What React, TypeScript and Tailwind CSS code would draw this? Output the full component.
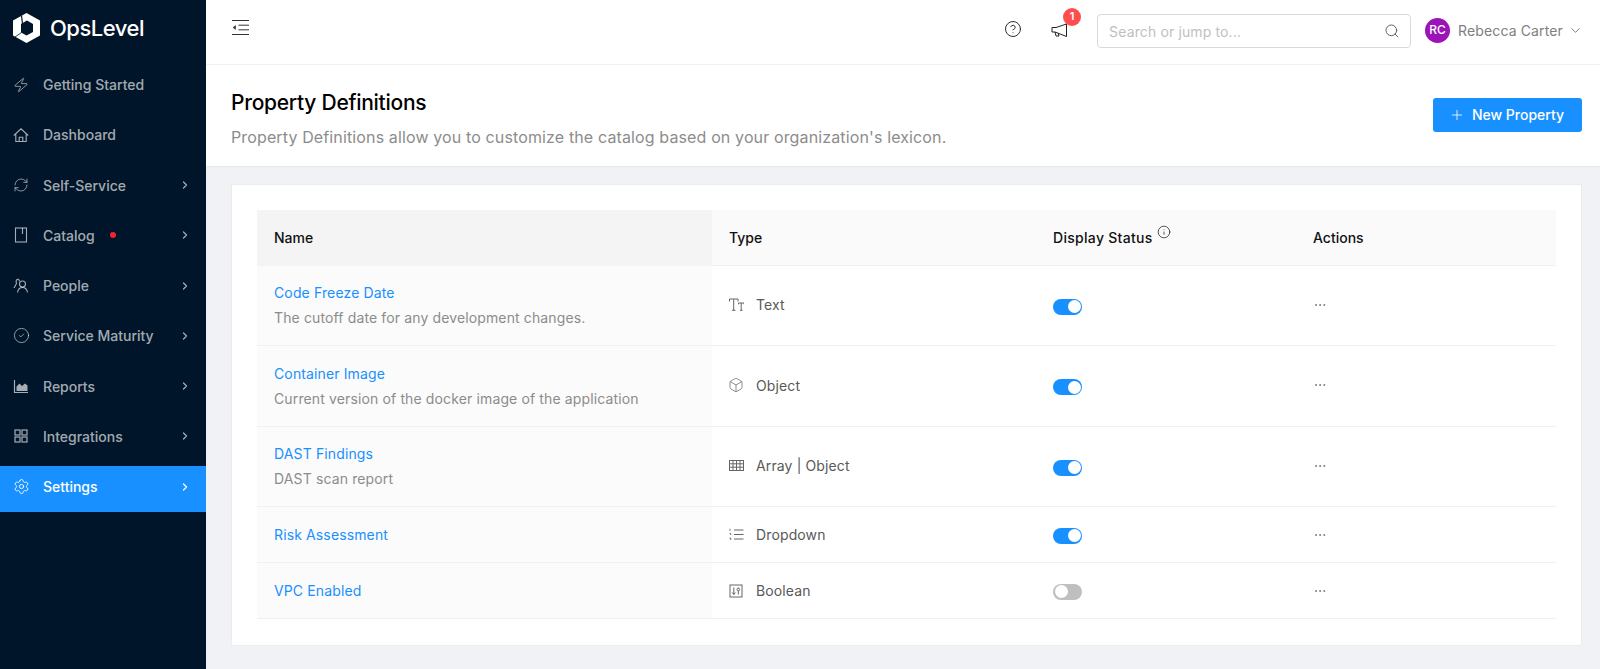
import { ChevronDown, ChevronRight, Plus, Search, Ellipsis, Info, CircleHelp, RefreshCw, CircleCheck, Settings, Zap, Box } from "lucide-react";
import type { ReactNode } from "react";

const Logo = () => (
  <svg width="27" height="30" viewBox="0 0 27 30">
    <path d="M13.5 0 L27 7.5 V22.5 L13.5 30 L0 22.5 V7.5 Z" fill="#fff" />
    <path d="M14 7.5 L20 11 V19 L13.5 22.5 L8 19.5 V11 Z" fill="#001529" />
    <path d="M8.5 2.5 L9.5 11" stroke="#001529" strokeWidth="1.2" />
    <path d="M2 24 L8.5 19.5" stroke="#001529" strokeWidth="0.8" />
  </svg>
);

const BookIcon = () => (
  <svg width="16" height="16" viewBox="0 0 16 16" fill="none" stroke="currentColor" strokeWidth="1.1">
    <rect x="2.5" y="1" width="11" height="14" />
    <path d="M9.5 1v6" />
  </svg>
);

const HomeIcon = () => (
  <svg width="16" height="16" viewBox="0 0 16 16" fill="none" stroke="currentColor" strokeWidth="1.1">
    <path d="M0.8 8.5 L8 1.8 L15.2 8.5M2.8 7v7.5h10.4V7M6.2 14.5v-4.2h3.6v4.2" />
  </svg>
);

const PeopleIcon = () => (
  <svg width="16" height="16" viewBox="0 0 16 16" fill="none" stroke="currentColor" strokeWidth="1.1">
    <circle cx="9.5" cy="6" r="3" />
    <path d="M4.5 14.5c.5-3 2.5-5 5-5s4.500 2 5 5M6.500 3.500A3 3 0 0 0 5.500 1.300C3.500 1 2.500 3 3.500 5.500L1 10" />
  </svg>
);

const ReportsIcon = () => (
  <svg width="16" height="16" viewBox="0 0 16 16" fill="none" stroke="currentColor" strokeWidth="1.2">
    <path d="M1.500 2v12.500h13.500" />
    <path d="M3.500 13V8.500l3-3 2.500 2.500 3-2.500 2.500 2V13Z" fill="currentColor" stroke="none" />
  </svg>
);

const GridIcon = () => (
  <svg width="16" height="16" viewBox="0 0 16 16" fill="none" stroke="currentColor" strokeWidth="1.2">
    <rect x="2" y="2" width="5" height="5" />
    <rect x="9" y="2" width="5" height="5" />
    <rect x="2" y="9" width="5" height="5" />
    <rect x="9" y="9" width="5" height="5" />
  </svg>
);

const MegaphoneIcon = () => (
  <svg width="17" height="15" viewBox="0 0 17 15" fill="none" stroke="#222" strokeWidth="1">
    <path d="M15.500 1 L5 4.500 H1 V9 H4 L15.500 13.500 Z" />
    <path d="M4 9 L5 13 H8 L7.300 10.300" />
  </svg>
);

const TextTypeIcon = () => (
  <svg width="15" height="13" viewBox="0 0 15 13" fill="none" stroke="currentColor" strokeWidth="1">
    <path d="M0.500 3.500V1h8.500v2.500M4.700 1V12.300M3 12.300h3.500M9.500 6.300V5H15v1.300M12.200 5v7.300M11 12.300h2.500" />
  </svg>
);

const TableIcon = () => (
  <svg width="15" height="13" viewBox="0 0 15 13" fill="none" stroke="currentColor" strokeWidth="1">
    <rect x="0.500" y="1.500" width="14" height="10" />
    <path d="M0.500 4.800h14M0.500 8.200h14M4 1.500v10M7.500 1.500v10M11 1.500v10" />
  </svg>
);

const ListIcon = () => (
  <svg width="15" height="13" viewBox="0 0 15 13" fill="none" stroke="currentColor" strokeWidth="1">
    <path d="M5 2h9.500M5 6.500h9.500M5 11h9.500" />
    <path d="M1 .8v2M0.500 5.500h1.200v1.500M0.500 10h1.200v2" strokeWidth="0.9" />
  </svg>
);

const BooleanIcon = () => (
  <svg width="14" height="14" viewBox="0 0 14 14" fill="none" stroke="currentColor" strokeWidth="1">
    <rect x="1" y="1" width="12" height="12" />
    <path d="M4.800 3.500v7M9.300 3.500v7M3.300 8.500l1.500 2 1.500-2" />
    <circle cx="9.300" cy="5.500" r="1.300" fill="#fff" />
  </svg>
);

const nav: { label: string; icon: ReactNode; arrow?: boolean; dot?: boolean; active?: boolean }[] = [
  { label: "Getting Started", icon: <Zap size={16} strokeWidth={1.2} className="-skew-x-12" /> },
  { label: "Dashboard", icon: <HomeIcon /> },
  { label: "Self-Service", icon: <RefreshCw size={16} strokeWidth={1.2} />, arrow: true },
  { label: "Catalog", icon: <BookIcon />, arrow: true, dot: true },
  { label: "People", icon: <PeopleIcon />, arrow: true },
  { label: "Service Maturity", icon: <CircleCheck size={17} strokeWidth={1.2} />, arrow: true },
  { label: "Reports", icon: <ReportsIcon />, arrow: true },
  { label: "Integrations", icon: <GridIcon />, arrow: true },
  { label: "Settings", icon: <Settings size={17} strokeWidth={1.25} />, arrow: true, active: true },
];

const rows: { name: string; desc?: string; type: string; icon: ReactNode; on: boolean; h: string }[] = [
  { name: "Code Freeze Date", desc: "The cutoff date for any development changes.", type: "Text", icon: <TextTypeIcon />, on: true, h: "h-[80px]" },
  { name: "Container Image", desc: "Current version of the docker image of the application", type: "Object", icon: <Box size={16} strokeWidth={1.1} className="-ml-[1px]" />, on: true, h: "h-[81px]" },
  { name: "DAST Findings", desc: "DAST scan report", type: "Array | Object", icon: <TableIcon />, on: true, h: "h-[80px]" },
  { name: "Risk Assessment", type: "Dropdown", icon: <ListIcon />, on: true, h: "h-[56px]" },
  { name: "VPC Enabled", type: "Boolean", icon: <BooleanIcon />, on: false, h: "h-[56px]" },
];

const Toggle = ({ on }: { on: boolean }) => (
  <div className={`mt-[2px] flex h-[16px] w-[29px] items-center rounded-full px-[1.5px] ${on ? "justify-end bg-[#1890ff]" : "justify-start bg-[#bfbfbf]"}`}>
    <div className="h-[13px] w-[13px] rounded-full bg-white" />
  </div>
);

const App = () => {
  return (
    <div className="flex h-[669px] w-[1600px] overflow-hidden bg-[#f0f2f5] font-['Inter',sans-serif] text-[14px] tracking-[0.13px]">
      <aside className="h-full w-[206px] shrink-0 bg-[#001529]">
        <div className="flex h-[56px] items-center gap-[10px] pl-[13px]">
          <Logo />
          <span className="text-[22px] font-medium leading-none tracking-[-0.5px] text-white">OpsLevel</span>
        </div>
        <nav className="flex flex-col gap-[5px] pt-[6px]">
          {nav.map((item) => (
            <div
              key={item.label}
              className={`flex items-center pl-[13px] pr-[15px] font-medium tracking-normal ${item.active ? "mt-[1.7px] h-[46px] bg-[#1890ff] pb-[4px] text-white" : "h-[45.25px] text-[#ffffffa6]"}`}
            >
              <span className="flex w-[30px] shrink-0">{item.icon}</span>
              <span>{item.label}</span>
              {item.dot && <span className="ml-[15px] h-[6px] w-[6px] rounded-full bg-[#f5222d]" />}
              {item.arrow && <ChevronRight size={12} strokeWidth={2.5} className="ml-auto" />}
            </div>
          ))}
        </nav>
      </aside>

      <div className="flex min-w-0 flex-1 flex-col">
        <header className="flex h-[65px] shrink-0 items-center border-b border-[#f0f0f0] bg-white pb-[2px] pl-[26px] pr-[17px]">
          <svg width="17" height="15" viewBox="0 0 17 15" fill="none" stroke="#333" strokeWidth="1" className="-mt-[7px]">
            <path d="M0 .5h17M6.500 5.200h10.500M6.500 9.800h10.500M0 14.500h17" />
            <path d="M3.800 5v5L.8 7.500z" fill="#333" stroke="none" />
          </svg>
          <CircleHelp size={18} strokeWidth={1.25} className="-mt-[4px] ml-auto text-[#222]" />
          <div className="relative -mt-[2px] ml-[29px] mr-[29px]">
            <MegaphoneIcon />
            <span className="absolute -top-[15px] left-[12px] flex h-[18px] w-[18px] items-center justify-center rounded-full bg-[#ff4d4f] text-[11px] font-semibold tracking-normal text-white">1</span>
          </div>
          <div className="flex h-[34px] w-[314px] items-center justify-between rounded-[4px] border border-[#d9d9d9] bg-white pl-[11px] pr-[10px]">
            <span className="text-[#bfbfbf]">Search or jump to...</span>
            <Search size={16} strokeWidth={1.4} className="text-[#555]" />
          </div>
          <div className="-mt-[2px] ml-[14px] flex h-[25px] w-[25px] items-center justify-center rounded-full bg-[#9c13b8] text-[12px] font-medium tracking-normal text-white">RC</div>
          <span className="-mt-[2px] ml-[8px] text-[#808080]">Rebecca Carter</span>
          <ChevronDown size={15} strokeWidth={1.2} className="-mt-[2px] ml-[5px] text-[#555]" />
        </header>

        <section className="flex h-[102px] shrink-0 items-center justify-between border-b border-[#e8e8e8] bg-white pl-[25px] pr-[18px]">
          <div className="pt-[7px]">
            <h1 className="text-[21px] font-medium leading-[28px] tracking-[-0.27px] text-black">Property Definitions</h1>
            <p className="mt-[8px] text-[16px] leading-[24px] text-[#8c8c8c]">Property Definitions allow you to customize the catalog based on your organization's lexicon.</p>
          </div>
          <button className="-mt-[2px] flex h-[34px] w-[149px] items-center justify-center gap-[7px] rounded-[3px] bg-[#1890ff] pr-[2px] text-[14px] font-medium tracking-normal text-white">
            <Plus size={16} strokeWidth={1.25} />
            New Property
          </button>
        </section>

        <main className="flex-1 pl-[25px] pr-[18px] pt-[17px]">
          <div className="border border-[#ececec] bg-white p-[25px] pb-[26px]">
            <div className="flex h-[56px] items-center border-b border-[#f0f0f0] bg-[#fafafa] pb-[1px] font-medium tracking-normal text-[#111]">
              <div className="-mb-[1px] flex h-[56px] w-[455px] shrink-0 items-center bg-[#f4f4f4] pb-[1px] pl-[17px]">Name</div>
              <div className="w-[324px] shrink-0 pl-[17px]">Type</div>
              <div className="flex w-[260px] shrink-0 items-center pl-[17px] tracking-[0.3px]">
                Display Status
                <Info size={14} strokeWidth={1.2} className="-mt-[10px] ml-[4px]" />
              </div>
              <div className="pl-[17px]">Actions</div>
            </div>
            {rows.map((row) => (
              <div key={row.name} className={`flex items-center border-b border-[#f0f0f0] ${row.h}`}>
                <div className="flex h-full w-[455px] shrink-0 flex-col justify-center bg-[#fbfbfb] pl-[17px]">
                  <span className="leading-[22px] text-[#1890ff]">{row.name}</span>
                  {row.desc && <span className="mt-[3px] leading-[22px] text-[#8c8c8c]">{row.desc}</span>}
                </div>
                <div className={`flex w-[324px] shrink-0 items-center pl-[17px] text-[#595959] ${row.desc ? "-mt-[2px]" : ""}`}>
                  <span className="flex w-[27px] shrink-0 text-[#666]">{row.icon}</span>
                  {row.type}
                </div>
                <div className="w-[260px] shrink-0 pl-[17px]">
                  <Toggle on={row.on} />
                </div>
                <div className={`pl-[17px] text-[#666] ${row.desc ? "-mt-[2px]" : ""}`}>
                  <Ellipsis size={14} strokeWidth={1.25} />
                </div>
              </div>
            ))}
          </div>
        </main>
      </div>
    </div>
  );
};

export default App;
